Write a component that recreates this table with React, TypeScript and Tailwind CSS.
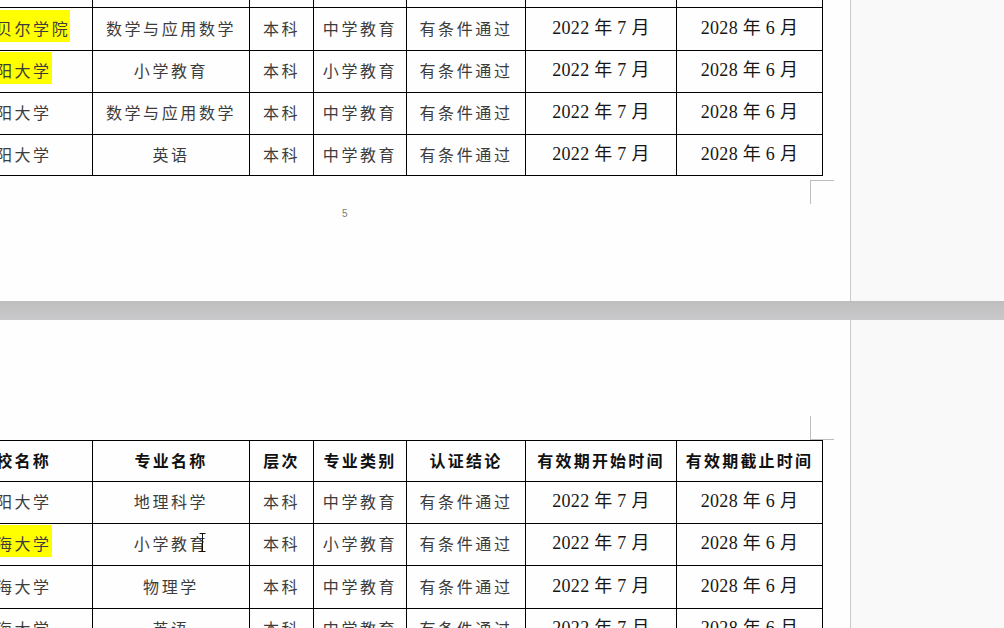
const cjk = "font-['Noto_Sans_CJK_SC',sans-serif]"
const num = "font-['Liberation_Serif','Noto_Sans_CJK_SC',serif]"

type Row = { school: string; hl: boolean; major: string; type: string; h: string }

const topRows: Row[] = [
  { school: '大连贝尔学院', hl: true, major: '数学与应用数学', type: '中学教育', h: 'h-[43px]' },
  { school: '沈阳大学', hl: true, major: '小学教育', type: '小学教育', h: 'h-[42px]' },
  { school: '沈阳大学', hl: false, major: '数学与应用数学', type: '中学教育', h: 'h-[42px]' },
  { school: '沈阳大学', hl: false, major: '英语', type: '中学教育', h: 'h-[41px]' },
]

const bottomRows: Row[] = [
  { school: '沈阳大学', hl: false, major: '地理科学', type: '中学教育', h: 'h-[42px]' },
  { school: '渤海大学', hl: true, major: '小学教育', type: '小学教育', h: 'h-[42px]' },
  { school: '渤海大学', hl: false, major: '物理学', type: '中学教育', h: 'h-[43px]' },
  { school: '渤海大学', hl: false, major: '英语', type: '中学教育', h: 'h-[42px]' },
]

const headers = ['学校名称', '专业名称', '层次', '专业类别', '认证结论', '有效期开始时间', '有效期截止时间']

function Cols() {
  return (
    <colgroup>
      <col className="w-[156px]" />
      <col className="w-[157px]" />
      <col className="w-[64px]" />
      <col className="w-[93px]" />
      <col className="w-[119px]" />
      <col className="w-[151px]" />
      <col className="w-[146px]" />
    </colgroup>
  )
}

function Cell({ children, mono }: { children?: React.ReactNode; mono?: boolean }) {
  return (
    <td
      className={`border border-black p-0 pb-[3px] text-center align-middle whitespace-nowrap leading-[22px] ${
        mono ? `${num} text-[18px] text-[#161616] tracking-[0.3px]` : `${cjk} text-[16px] text-[#3c3c3c] tracking-[2.6px]`
      }`}
    >
      {children}
    </td>
  )
}

function DataRow({ r, cursor }: { r: Row; cursor?: boolean }) {
  return (
    <tr className={r.h}>
      <Cell>
        {r.hl ? <span className="bg-[#ffff00] pt-[6px] pb-[2px]">{r.school}</span> : r.school}
      </Cell>
      <Cell>
        <span className="relative">
          {r.major}
          {cursor && (
            <svg className="absolute right-[2px] top-[2px]" width="7" height="19" viewBox="0 0 7 19">
              <path d="M0.5 0.5h6M3.5 0.5v18M0.5 18.5h6" stroke="#111" strokeWidth="1" fill="none" />
            </svg>
          )}
        </span>
      </Cell>
      <Cell>本科</Cell>
      <Cell>{r.type}</Cell>
      <Cell>有条件通过</Cell>
      <Cell mono>2022 年 7 月</Cell>
      <Cell mono>2028 年 6 月</Cell>
    </tr>
  )
}

function Margin() {
  return <div className="w-[154px] shrink-0 border-l border-[#c9c9c9] bg-[#f9f9f9]" />
}

export default function App() {
  return (
    <div className="w-[1004px] h-[628px] overflow-hidden flex flex-col bg-[#f9f9f9]">
      {/* page 5 (bottom part) */}
      <div className="h-[301px] flex shrink-0">
        <div className="w-[850px] relative overflow-hidden bg-[#fefefe]">
          <table className="table-fixed border-collapse ml-[-64px] mt-[-35px] w-[886px]">
            <Cols />
            <tbody>
              <tr className="h-[42px]">
                <Cell /><Cell /><Cell /><Cell /><Cell /><Cell /><Cell />
              </tr>
              {topRows.map((r, i) => (
                <DataRow key={i} r={r} />
              ))}
            </tbody>
          </table>
          <div className="absolute left-[810px] top-[180px] w-[24px] h-[24px] border-l border-t border-[#bdbdbd]" />
          <div className="pl-[342px] mt-[30px] text-[10px] text-[#7a7a7a] font-['Liberation_Sans',sans-serif]">5</div>
        </div>
        <Margin />
      </div>

      <div className="h-[19px] shrink-0 bg-linear-to-b from-[#bebebe] to-[#c9c9cc]" />

      {/* page 6 (top part) */}
      <div className="flex-1 flex min-h-0">
        <div className="w-[850px] relative overflow-hidden bg-[#fefefe]">
          <div className="absolute left-[810px] top-[96px] w-[24px] h-[24px] border-l border-b border-[#bdbdbd]" />
          <table className="relative table-fixed border-collapse ml-[-64px] mt-[120px] w-[886px]">
            <Cols />
            <tbody>
              <tr className="h-[41px]">
                {headers.map((h) => (
                  <td
                    key={h}
                    className={`border border-black p-0 pb-[3px] text-center align-middle whitespace-nowrap leading-[22px] ${cjk} font-bold text-[16px] text-[#111] tracking-[2.2px]`}
                  >
                    {h}
                  </td>
                ))}
              </tr>
              {bottomRows.map((r, i) => (
                <DataRow key={i} r={r} cursor={i === 1} />
              ))}
            </tbody>
          </table>
        </div>
        <Margin />
      </div>
    </div>
  )
}
